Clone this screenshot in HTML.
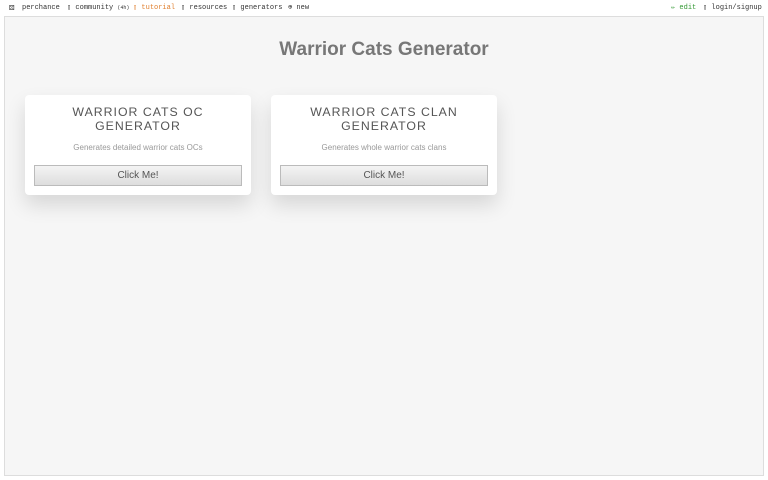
<!DOCTYPE html>
<html><head><style>
body{margin:0;width:768px;height:480px;background:#fff;font-family:"Liberation Sans",sans-serif;overflow:hidden;position:relative}
.top{position:absolute;top:0;left:0;right:0;height:16px;font-family:"Liberation Mono",monospace;font-size:7px;color:#333;line-height:17px}
.top span{position:absolute;white-space:nowrap}
.frame{position:absolute;left:4px;top:16px;width:758px;height:458px;border:1px solid #ddd;background:#f6f6f6}
h1{position:absolute;top:39px;left:0;width:768px;text-align:center;margin:0;font-size:19px;color:#777;font-weight:bold}
.card{position:absolute;top:95px;width:226px;height:100px;background:#fff;border-radius:4px;box-shadow:0 10px 20px rgba(0,0,0,.13);text-align:center}
.card .t{margin-top:10px;font-size:12.3px;letter-spacing:1px;color:#555;line-height:14px}
.card .d{margin-top:10px;font-size:8px;color:#999}
.card .b{position:absolute;left:9px;top:70px;width:206px;height:19px;border:1px solid #bbb;background:linear-gradient(#f4f4f4,#ddd);font-size:10px;color:#555;line-height:19px}
</style></head><body>
<div class="top">
<span style="left:9px;font-size:9px">⚄</span>
<span style="left:22px">perchance</span>
<span style="left:67px">▯ community <small style="font-size:5px">(4h)</small></span>
<span style="left:133px;color:#e08030">▯ tutorial</span>
<span style="left:181px">▯ resources</span>
<span style="left:232px">▯ generators</span>
<span style="left:288px">⊕ new</span>
<span style="left:671px;color:#393">✏ edit</span>
<span style="left:703px">▯ login/signup</span>
</div>
<div class="frame"></div>
<h1>Warrior Cats Generator</h1>
<div class="card" style="left:25px"><div class="t">WARRIOR CATS OC<br>GENERATOR</div><div class="d">Generates detailed warrior cats OCs</div><div class="b">Click Me!</div></div>
<div class="card" style="left:271px"><div class="t">WARRIOR CATS CLAN<br>GENERATOR</div><div class="d">Generates whole warrior cats clans</div><div class="b">Click Me!</div></div>
</body></html>
